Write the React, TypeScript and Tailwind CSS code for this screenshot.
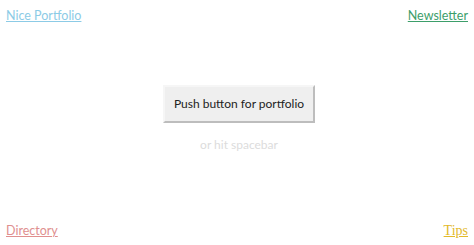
export default function App() {
  return (
    <div className="flex h-[245px] w-full flex-col justify-between bg-white px-[6px] pt-[7px] pb-[4px] font-['Lato',sans-serif] text-[12.5px]">
      {/* Top links */}
      <div className="flex items-start justify-between">
        <a href="#" className="text-[#8ccbe6] underline">
          Nice Portfolio
        </a>
        <a href="#" className="text-[#3d9e6a] underline">
          Newsletter
        </a>
      </div>

      {/* Center */}
      <div className="mb-[6px] flex flex-col items-center gap-[13px] pl-[4px]">
        <button className="h-[38px] w-[152px] border-2 border-t-[#f6f6f6] border-l-[#f6f6f6] border-r-[#bdbdbd] border-b-[#bdbdbd] bg-[#efefef] text-[12px] text-[#222]">
          Push button for portfolio
        </button>
        <p className="text-[12px] text-[#dcdcdc]">or hit spacebar</p>
      </div>

      {/* Bottom links */}
      <div className="flex items-end justify-between">
        <a href="#" className="text-[#e08f8f] underline">
          Directory
        </a>
        <a href="#" className="font-['Liberation_Serif',serif] text-[14px] text-[#e2b92a] underline">
          Tips
        </a>
      </div>
    </div>
  )
}
